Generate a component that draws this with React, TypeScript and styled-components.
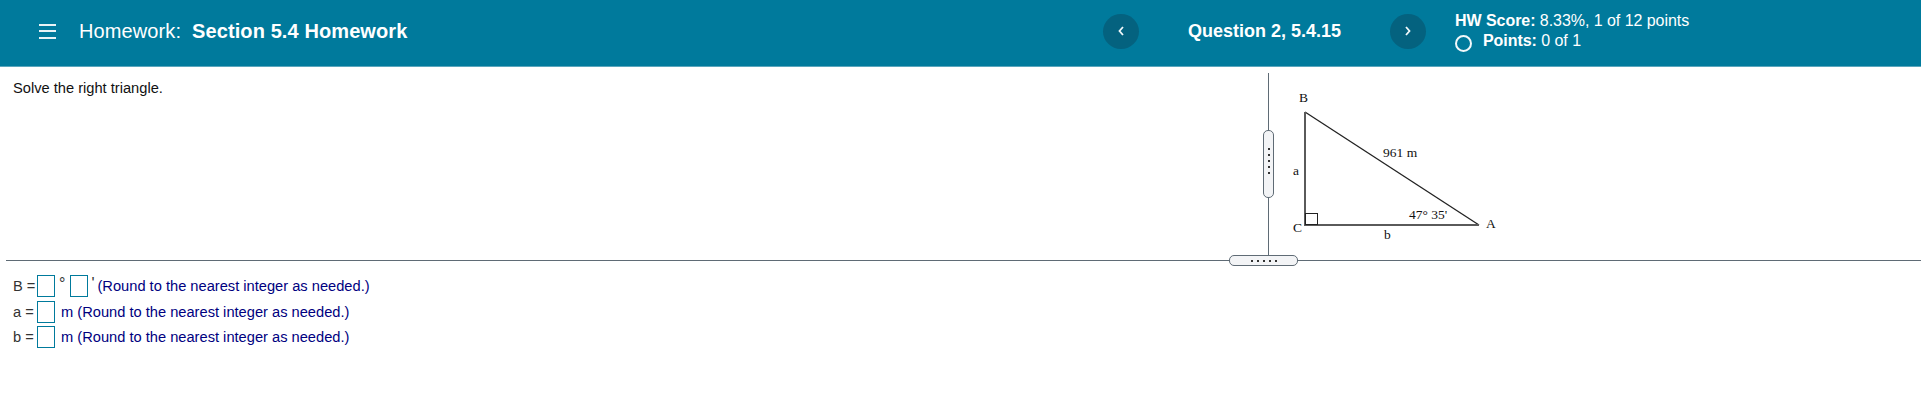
import * as React from 'react';
import styled, { createGlobalStyle } from 'styled-components';

const Global = createGlobalStyle`
  html, body {
    margin: 0;
    padding: 0;
    background: #fff;
    font-family: "Liberation Sans", Arial, sans-serif;
  }
`;

const Page = styled.div`
  width: 1921px;
  height: 401px;
  overflow: hidden;
  position: relative;
`;

const Header = styled.header`
  height: 67px;
  box-sizing: border-box;
  background: #007a9c;
  border-bottom: 1px solid #5aa6bd;
  color: #fff;
  display: flex;
  align-items: center;
  padding-left: 39px;
`;

const MenuIcon = styled.div`
  width: 17px;
  height: 15px;
  display: flex;
  flex-direction: column;
  justify-content: space-between;
  margin: -4px 23px 0 0;

  span {
    display: block;
    height: 2px;
    background: #e8f3f6;
  }
`;

const Title = styled.div`
  font-size: 20px;
  letter-spacing: 0.1px;
  width: 1024px;
  margin-top: -4px;
  white-space: nowrap;

  b {
    margin-left: 11px;
  }
`;

const NavButton = styled.div`
  width: 36px;
  height: 35px;
  border-radius: 50%;
  background: #04627f;
  display: flex;
  align-items: center;
  justify-content: center;
  margin-top: -4px;
`;

const QuestionLabel = styled.div`
  width: 251px;
  margin-top: -4px;
  padding-left: 49px;
  box-sizing: border-box;
  font-size: 18px;
  font-weight: bold;
  white-space: nowrap;
`;

const Score = styled.div`
  margin-left: 29px;
  margin-top: -4px;
  font-size: 16px;
  letter-spacing: -0.05px;
  line-height: 20px;
  white-space: nowrap;
`;

const PointsRow = styled.div`
  display: flex;
  align-items: center;
  gap: 11px;
`;

const Ring = styled.span`
  width: 17px;
  height: 17px;
  box-sizing: border-box;
  border: 2px solid #f2f8fa;
  border-radius: 50%;
  margin-top: 4px;
`;

const TopPane = styled.section`
  height: 194px;
  box-sizing: border-box;
  margin-left: 6px;
  border-bottom: 1px solid #5f6b75;
  display: flex;
`;

const Prompt = styled.div`
  width: 1262px;
  box-sizing: border-box;
  padding: 13px 0 0 7px;
  font-size: 14.67px;
  color: #111;
`;

const Figure = styled.div`
  flex: 1;
  position: relative;
  border-left: 1px solid #5f6b75;
  margin-top: 6px;
  padding-top: 6px;
  box-sizing: border-box;
`;

const VerticalHandle = styled.div`
  position: absolute;
  left: -6px;
  top: 57px;
  width: 11px;
  height: 68px;
  box-sizing: border-box;
  padding-bottom: 6px;
  background: #f3f4f6;
  border: 1px solid #5f6b75;
  border-radius: 5px;
  display: flex;
  flex-direction: column;
  align-items: center;
  justify-content: center;
  gap: 4px;
`;

const HorizontalHandle = styled.div`
  position: absolute;
  left: 1229px;
  top: 255px;
  width: 69px;
  height: 11px;
  box-sizing: border-box;
  background: #f3f4f6;
  border: 1px solid #5f6b75;
  border-radius: 5px;
  display: flex;
  align-items: center;
  justify-content: center;
  gap: 4px;
`;

const GripDot = styled.i`
  width: 2px;
  height: 2px;
  background: #333;
`;

const Answers = styled.section`
  padding: 14px 0 0 13px;
  display: flex;
  flex-direction: column;
  gap: 3.5px;
  font-size: 14.67px;
`;

const AnswerRow = styled.div`
  display: flex;
  align-items: center;
  height: 22px;
  white-space: nowrap;
`;

const Variable = styled.span`
  color: #333;
  width: 24px;
`;

const Box = styled.span<{ $gap?: number }>`
  width: 18px;
  height: 22px;
  box-sizing: border-box;
  border: 1px solid #007a9c;
  margin-right: ${(p) => p.$gap ?? 6}px;
`;

const Symbol = styled.span<{ $gap: number }>`
  color: #333;
  margin-right: ${(p) => p.$gap}px;
  align-self: flex-start;
  font-size: 16px;
  line-height: 18px;
`;

const Hint = styled.span`
  color: #000080;
`;

const MathText = styled.text`
  font-family: "Liberation Serif", "Times New Roman", serif;
  font-size: 13.5px;
  fill: #111;
`;

const SVG_TOP = 33;
const dots = [0, 1, 2, 3, 4];

const Chevron = ({ d }: { d: string }) => (
  <svg width="6" height="10" viewBox="0 0 6 10">
    <path d={d} fill="none" stroke="#f2f8fa" strokeWidth="1.8" />
  </svg>
);

const TriangleFigure = () => (
  <svg width="230" height="175" viewBox="0 0 230 175" style={{ display: 'block', marginLeft: 18 }}>
    <g transform={`translate(18 ${SVG_TOP})`}>
      <path d="M0 0 L174 113" fill="none" stroke="#222" strokeWidth="1.3" />
      <path d="M0 0 V113 H174" fill="none" stroke="#5a5a5a" strokeWidth="2" />
      <rect x="0.5" y="101.5" width="12" height="11" fill="none" stroke="#222" strokeWidth="1" />
      <MathText x="-6" y="-10">B</MathText>
      <MathText x="-12" y="63">a</MathText>
      <MathText x="-12" y="120">C</MathText>
      <MathText x="79" y="127">b</MathText>
      <MathText x="181" y="116">A</MathText>
      <MathText x="78" y="45">961 m</MathText>
      <MathText x="104" y="107">47° 35'</MathText>
    </g>
  </svg>
);

export default function App() {
  return (
    <Page>
      <Global />
      <Header>
        <MenuIcon>
          <span />
          <span />
          <span />
        </MenuIcon>
        <Title>
          Homework:<b>Section 5.4 Homework</b>
        </Title>
        <NavButton>
          <Chevron d="M5 1 L1.5 5 L5 9" />
        </NavButton>
        <QuestionLabel>Question 2, 5.4.15</QuestionLabel>
        <NavButton>
          <Chevron d="M1 1 L4.5 5 L1 9" />
        </NavButton>
        <Score>
          <div>
            <b>HW Score:</b> 8.33%, 1 of 12 points
          </div>
          <PointsRow>
            <Ring />
            <span>
              <b>Points:</b> 0 of 1
            </span>
          </PointsRow>
        </Score>
      </Header>
      <TopPane>
        <Prompt>Solve the right triangle.</Prompt>
        <Figure>
          <VerticalHandle>
            {dots.map((d) => (
              <GripDot key={d} />
            ))}
          </VerticalHandle>
          <TriangleFigure />
        </Figure>
      </TopPane>
      <HorizontalHandle>
        {dots.map((d) => (
          <GripDot key={d} />
        ))}
      </HorizontalHandle>
      <Answers>
        <AnswerRow>
          <Variable>B =</Variable>
          <Box $gap={4} />
          <Symbol $gap={5}>°</Symbol>
          <Box $gap={3} />
          <Symbol $gap={3}>'</Symbol>
          <Hint>(Round to the nearest integer as needed.)</Hint>
        </AnswerRow>
        <AnswerRow>
          <Variable>a =</Variable>
          <Box />
          <Hint>m (Round to the nearest integer as needed.)</Hint>
        </AnswerRow>
        <AnswerRow>
          <Variable>b =</Variable>
          <Box />
          <Hint>m (Round to the nearest integer as needed.)</Hint>
        </AnswerRow>
      </Answers>
    </Page>
  );
}
